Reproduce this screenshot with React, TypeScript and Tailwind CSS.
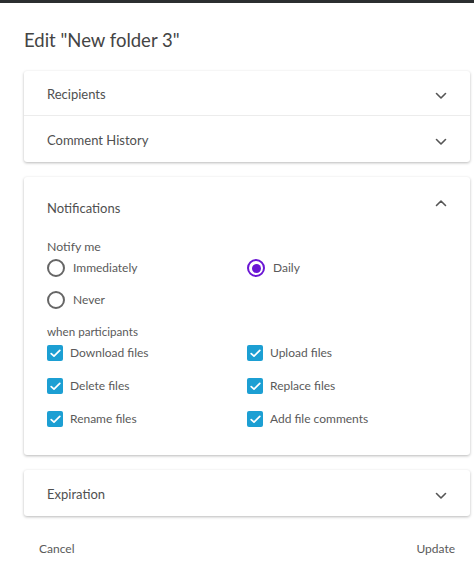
import type { ReactNode } from 'react';

const font = { fontFamily: 'Lato, "Open Sans", sans-serif' };

function Chevron({ up = false }: { up?: boolean }) {
    return (
        <svg width="12" height="8" viewBox="0 0 12 8" className={up ? 'rotate-180' : ''}>
            <path d="M1.5 1.5 L6 6 L10.5 1.5" fill="none" stroke="#555" strokeWidth="1.6" strokeLinecap="round" strokeLinejoin="round" />
        </svg>
    );
}

function Row({ label, up = false, className = '' }: { label: string; up?: boolean; className?: string }) {
    return (
        <div className={`flex items-center justify-between px-[23px] ${className}`}>
            <span className="pt-[3px] text-[13px] text-[#505050]">{label}</span>
            <span className={up ? '-mt-[8px]' : 'mt-[6px]'}>
                <Chevron up={up} />
            </span>
        </div>
    );
}

function Card({ children, className = '' }: { children: ReactNode; className?: string }) {
    return (
        <div className={`rounded-[3px] bg-white shadow-[0_1px_3px_rgba(0,0,0,0.28)] ${className}`}>
            {children}
        </div>
    );
}

function Radio({ label, checked = false }: { label: string; checked?: boolean }) {
    return (
        <div className="flex h-[24px] items-center gap-[8px]">
            {checked ? (
                <span className="flex h-[18px] w-[18px] items-center justify-center rounded-full border-2 border-[#6a16d4]">
                    <span className="h-[9px] w-[9px] rounded-full bg-[#6a16d4]" />
                </span>
            ) : (
                <span className="h-[18px] w-[18px] rounded-full border-2 border-[#666]" />
            )}
            <span className="text-[12px] text-[#5a5a5a]">{label}</span>
        </div>
    );
}

function Check({ label }: { label: string }) {
    return (
        <div className="flex h-[20px] items-center gap-[7px]">
            <span className="flex h-[16px] w-[16px] items-center justify-center rounded-[2px] bg-[#1c9fd3]">
                <svg width="11" height="9" viewBox="0 0 11 9">
                    <path d="M1.2 4.6 L4 7.2 L9.8 1.4" fill="none" stroke="#fff" strokeWidth="1.7" strokeLinecap="round" strokeLinejoin="round" />
                </svg>
            </span>
            <span className="text-[12px] text-[#5a5a5a]">{label}</span>
        </div>
    );
}

export default function App() {
    return (
        <div style={font} className="h-[565px] w-[474px] overflow-hidden border-t-[3px] border-[#2b2e30] bg-white">
            <div className="pl-6 pr-1">
                <h1 className="mt-[25px] text-[18.5px] leading-[24px] text-[#444]">Edit "New folder 3"</h1>

                <Card className="mt-[19px]">
                    <Row label="Recipients" className="h-[45px] border-b border-[#ececec]" />
                    <Row label="Comment History" className="h-[46px]" />
                </Card>

                <Card className="mt-[15px] pb-[26px]">
                    <Row label="Notifications" up className="h-[60px]" />
                    <div className="px-[23px]">
                        <div className="mt-[2px] text-[12.3px] leading-[16px] text-[#5a5a5a]">Notify me</div>
                        <div className="mt-[1px] grid grid-cols-[200px_1fr] gap-y-[8px]">
                            <Radio label="Immediately" />
                            <Radio label="Daily" checked />
                            <Radio label="Never" />
                        </div>
                        <div className="mt-[12px] text-[11.6px] leading-[16px] text-[#5a5a5a]">when participants</div>
                        <div className="mt-[3px] grid grid-cols-[200px_1fr] gap-y-[13px]">
                            <Check label="Download files" />
                            <Check label="Upload files" />
                            <Check label="Delete files" />
                            <Check label="Replace files" />
                            <Check label="Rename files" />
                            <Check label="Add file comments" />
                        </div>
                    </div>
                </Card>

                <Card className="mt-[15px]">
                    <Row label="Expiration" className="h-[46px]" />
                </Card>

                <div className="mt-[24px] flex items-center justify-between pl-[15px] pr-[15px] text-[12px] text-[#5a5a5a]">
                    <span>Cancel</span>
                    <span>Update</span>
                </div>
            </div>
        </div>
    );
}
